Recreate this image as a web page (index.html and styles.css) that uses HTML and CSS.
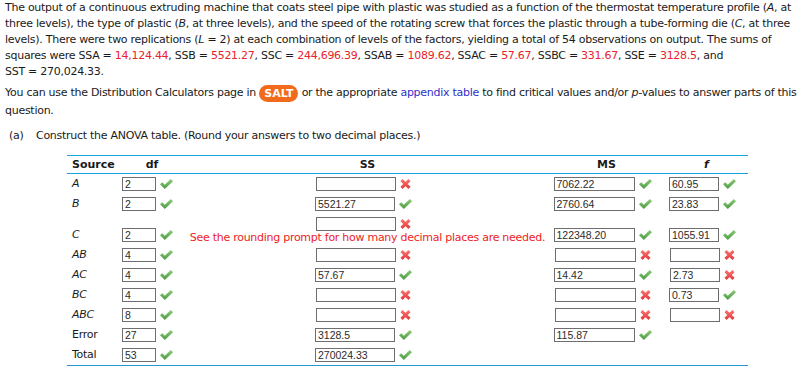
FILE: index.html
```html
<!DOCTYPE html>
<html lang="en">
  <head>
    <meta charset="UTF-8" />
    <meta name="viewport" content="width=device-width, initial-scale=1.0" />
    <title>Three-Factor ANOVA</title>
    <link rel="stylesheet" href="styles.css">
  </head>
  <body>
    <p class="intro">
      The output of a continuous extruding machine that coats steel pipe with plastic was studied as a function of the thermostat temperature profile (<i>A</i>, at three levels), the type of plastic (<i>B</i>, at three levels), and the speed of the rotating screw that forces the plastic through a tube-forming die (<i>C</i>, at three levels). There were two replications (<i>L</i> = 2) at each combination of levels of the factors, yielding a total of 54 observations on output. The sums of squares were SSA = <span class="given">14,124.44</span>, SSB = <span class="given">5521.27</span>, SSC = <span class="given">244,696.39</span>, SSAB = <span class="given">1089.62</span>, SSAC = <span class="given">57.67</span>, SSBC = <span class="given">331.67</span>, SSE = <span class="given">3128.5</span>, and <span class="stat">SST = 270,024.33</span>.
    </p>

    <p class="tools">
      You can use the Distribution Calculators page in <span class="salt">SALT</span> or the appropriate <a href="#" class="appendix">appendix table</a> to find critical values and/or <i>p</i>-values to answer parts of this question.
    </p>

    <p class="part">
      <span class="part-label">(a)</span>Construct the ANOVA table. (Round your answers to two decimal places.)
    </p>

    <table class="anova">
      <colgroup>
        <col class="col-source">
        <col class="col-df">
        <col class="col-ss">
        <col class="col-ms">
        <col class="col-f">
      </colgroup>
      <thead>
        <tr>
          <th class="source">Source</th>
          <th>df</th>
          <th>SS</th>
          <th>MS</th>
          <th><i>f</i></th>
        </tr>
      </thead>
      <tbody>
        <tr>
          <td class="source"><i>A</i></td>
          <td class="df"><span class="field"><input type="text" class="box box-df" value="2" readonly><svg class="mark"><use href="#ok"/></svg></span></td>
          <td class="ss"><span class="field"><input type="text" class="box box-ss" value="" readonly><svg class="mark mark-x"><use href="#bad"/></svg></span></td>
          <td class="ms"><span class="field"><input type="text" class="box box-ms" value="7062.22" readonly><svg class="mark"><use href="#ok"/></svg></span></td>
          <td class="f"><span class="field"><input type="text" class="box box-f" value="60.95" readonly><svg class="mark"><use href="#ok"/></svg></span></td>
        </tr>
        <tr>
          <td class="source"><i>B</i></td>
          <td class="df"><span class="field"><input type="text" class="box box-df" value="2" readonly><svg class="mark"><use href="#ok"/></svg></span></td>
          <td class="ss"><span class="field"><input type="text" class="box box-ss" value="5521.27" readonly><svg class="mark"><use href="#ok"/></svg></span></td>
          <td class="ms"><span class="field"><input type="text" class="box box-ms" value="2760.64" readonly><svg class="mark"><use href="#ok"/></svg></span></td>
          <td class="f"><span class="field"><input type="text" class="box box-f" value="23.83" readonly><svg class="mark"><use href="#ok"/></svg></span></td>
        </tr>
        <tr>
          <td class="source"><i>C</i></td>
          <td class="df"><span class="field"><input type="text" class="box box-df" value="2" readonly><svg class="mark"><use href="#ok"/></svg></span></td>
          <td class="ss has-hint">
            <span class="field"><input type="text" class="box box-ss" value="" readonly><svg class="mark mark-x"><use href="#bad"/></svg></span>
            <div class="hint">See the rounding prompt for how many decimal places are needed.</div>
          </td>
          <td class="ms"><span class="field"><input type="text" class="box box-ms" value="122348.20" readonly><svg class="mark"><use href="#ok"/></svg></span></td>
          <td class="f"><span class="field"><input type="text" class="box box-f" value="1055.91" readonly><svg class="mark"><use href="#ok"/></svg></span></td>
        </tr>
        <tr>
          <td class="source"><i>AB</i></td>
          <td class="df"><span class="field"><input type="text" class="box box-df" value="4" readonly><svg class="mark"><use href="#ok"/></svg></span></td>
          <td class="ss"><span class="field"><input type="text" class="box box-ss" value="" readonly><svg class="mark mark-x"><use href="#bad"/></svg></span></td>
          <td class="ms"><span class="field"><input type="text" class="box box-ms" value="" readonly><svg class="mark mark-x"><use href="#bad"/></svg></span></td>
          <td class="f"><span class="field"><input type="text" class="box box-f" value="" readonly><svg class="mark mark-x"><use href="#bad"/></svg></span></td>
        </tr>
        <tr>
          <td class="source"><i>AC</i></td>
          <td class="df"><span class="field"><input type="text" class="box box-df" value="4" readonly><svg class="mark"><use href="#ok"/></svg></span></td>
          <td class="ss"><span class="field"><input type="text" class="box box-ss" value="57.67" readonly><svg class="mark"><use href="#ok"/></svg></span></td>
          <td class="ms"><span class="field"><input type="text" class="box box-ms" value="14.42" readonly><svg class="mark"><use href="#ok"/></svg></span></td>
          <td class="f"><span class="field"><input type="text" class="box box-f" value="2.73" readonly><svg class="mark mark-x"><use href="#bad"/></svg></span></td>
        </tr>
        <tr>
          <td class="source"><i>BC</i></td>
          <td class="df"><span class="field"><input type="text" class="box box-df" value="4" readonly><svg class="mark"><use href="#ok"/></svg></span></td>
          <td class="ss"><span class="field"><input type="text" class="box box-ss" value="" readonly><svg class="mark mark-x"><use href="#bad"/></svg></span></td>
          <td class="ms"><span class="field"><input type="text" class="box box-ms" value="" readonly><svg class="mark mark-x"><use href="#bad"/></svg></span></td>
          <td class="f"><span class="field"><input type="text" class="box box-f" value="0.73" readonly><svg class="mark"><use href="#ok"/></svg></span></td>
        </tr>
        <tr>
          <td class="source"><i>ABC</i></td>
          <td class="df"><span class="field"><input type="text" class="box box-df" value="8" readonly><svg class="mark"><use href="#ok"/></svg></span></td>
          <td class="ss"><span class="field"><input type="text" class="box box-ss" value="" readonly><svg class="mark mark-x"><use href="#bad"/></svg></span></td>
          <td class="ms"><span class="field"><input type="text" class="box box-ms" value="" readonly><svg class="mark mark-x"><use href="#bad"/></svg></span></td>
          <td class="f"><span class="field"><input type="text" class="box box-f" value="" readonly><svg class="mark mark-x"><use href="#bad"/></svg></span></td>
        </tr>
        <tr>
          <td class="source">Error</td>
          <td class="df"><span class="field"><input type="text" class="box box-df" value="27" readonly><svg class="mark"><use href="#ok"/></svg></span></td>
          <td class="ss"><span class="field"><input type="text" class="box box-ss" value="3128.5" readonly><svg class="mark"><use href="#ok"/></svg></span></td>
          <td class="ms"><span class="field"><input type="text" class="box box-ms" value="115.87" readonly><svg class="mark"><use href="#ok"/></svg></span></td>
          <td class="f"></td>
        </tr>
        <tr>
          <td class="source">Total</td>
          <td class="df"><span class="field"><input type="text" class="box box-df" value="53" readonly><svg class="mark"><use href="#ok"/></svg></span></td>
          <td class="ss"><span class="field"><input type="text" class="box box-ss" value="270024.33" readonly><svg class="mark"><use href="#ok"/></svg></span></td>
          <td class="ms"></td>
          <td class="f"></td>
        </tr>
      </tbody>
    </table>

    <!-- answer marks, reused by every field -->
    <svg class="sprite" width="0" height="0" aria-hidden="true">
      <defs>
        <linearGradient id="ok-fill" x1="0" y1="0" x2="0" y2="1">
          <stop offset="0" stop-color="#8ccc7a" />
          <stop offset="1" stop-color="#4b9a42" />
        </linearGradient>
        <linearGradient id="bad-fill" x1="0" y1="0" x2="0" y2="1">
          <stop offset="0" stop-color="#f76e6e" />
          <stop offset="1" stop-color="#e43f3f" />
        </linearGradient>
        <symbol id="ok" viewBox="0 0 13 10">
          <polygon points="0,5.3 2.2,3.2 4.8,5.7 10.8,0 13,2.2 4.8,10" fill="url(#ok-fill)" />
        </symbol>
        <symbol id="bad" viewBox="0 0 11 10">
          <path d="M1.5 1.2 L9.5 8.8 M9.5 1.2 L1.5 8.8" stroke="url(#bad-fill)" stroke-width="3" fill="none" />
        </symbol>
      </defs>
    </svg>
  </body>
</html>
```

FILE: styles.css
```css
body {
  font-family: "DejaVu Sans", Verdana, sans-serif;
  font-size: 11px;
  letter-spacing: -0.27px;
  color: #1a1a1a;
  margin: 0;
  padding: 0 5px;
  background-color: #fff;
}

p {
  margin: 0;
}

.intro {
  line-height: 16px;
}

.given {
  color: #e8232a;
}

.stat {
  white-space: nowrap;
}

.tools {
  margin-top: 4px;
  line-height: 17px;
}

.salt {
  display: inline-block;
  height: 17px;
  line-height: 17px;
  padding: 0 5px;
  border-radius: 9px;
  background-color: #f26a1b;
  color: #fff;
  font-weight: bold;
  letter-spacing: 0;
  vertical-align: middle;
}

.appendix {
  color: #3030c8;
  text-decoration: none;
}

.part {
  margin-top: 9px;
  padding-left: 4px;
  line-height: 16px;
}

.part-label {
  display: inline-block;
  width: 27px;
}

/* ANOVA table */

.anova {
  margin: 11px 0 0 62px;
  width: 681px;
  table-layout: fixed;
  border-collapse: collapse;
  border-top: 1px solid #19a2de;
  border-bottom: 1px solid #2596d6;
}

.col-source {
  width: 50px;
}

.col-df {
  width: 70px;
}

.col-ss {
  width: 361px;
}

.col-ms {
  width: 117px;
}

.col-f {
  width: 83px;
}

.anova th {
  height: 17px;
  padding: 0;
  line-height: 17px;
  font-weight: bold;
  letter-spacing: 0;
  text-align: center;
  border-bottom: 1px solid #19a2de;
}

.anova th.source {
  text-align: left;
  padding-left: 5px;
}

.anova td {
  padding: 3px 0;
  line-height: 14px;
  vertical-align: bottom;
  white-space: nowrap;
}

.anova td.source {
  padding-left: 5px;
}

.anova td.df {
  padding-left: 5px;
}

.anova td.ss {
  text-align: center;
}

.anova td.ss .field {
  margin-right: 8px;
}

.anova td.ms,
.anova td.f {
  text-align: center;
  padding-right: 8px;
}

.anova td.has-hint {
  padding-bottom: 0;
}

.hint {
  color: #ee1c1c;
  line-height: 14px;
}

.field {
  display: inline-flex;
  align-items: center;
  gap: 4px;
  vertical-align: bottom;
}

.box {
  box-sizing: border-box;
  height: 14px;
  margin: 0;
  padding: 0 0 0 2px;
  border: 1px solid #6e6e6e;
  font-family: "Liberation Sans", Arial, sans-serif;
  font-size: 10.5px;
  letter-spacing: 0;
  line-height: 12px;
  color: #2b2b2b;
  background-color: #fff;
  outline: none;
}

.box-df {
  width: 34px;
}

.box-ss {
  width: 80px;
}

.box-ms {
  width: 81px;
}

.box-f {
  width: 50px;
}

.mark {
  width: 13px;
  height: 10px;
  flex: none;
}

.mark-x {
  width: 11px;
}

.sprite {
  position: absolute;
  width: 0;
  height: 0;
  overflow: hidden;
}
```
